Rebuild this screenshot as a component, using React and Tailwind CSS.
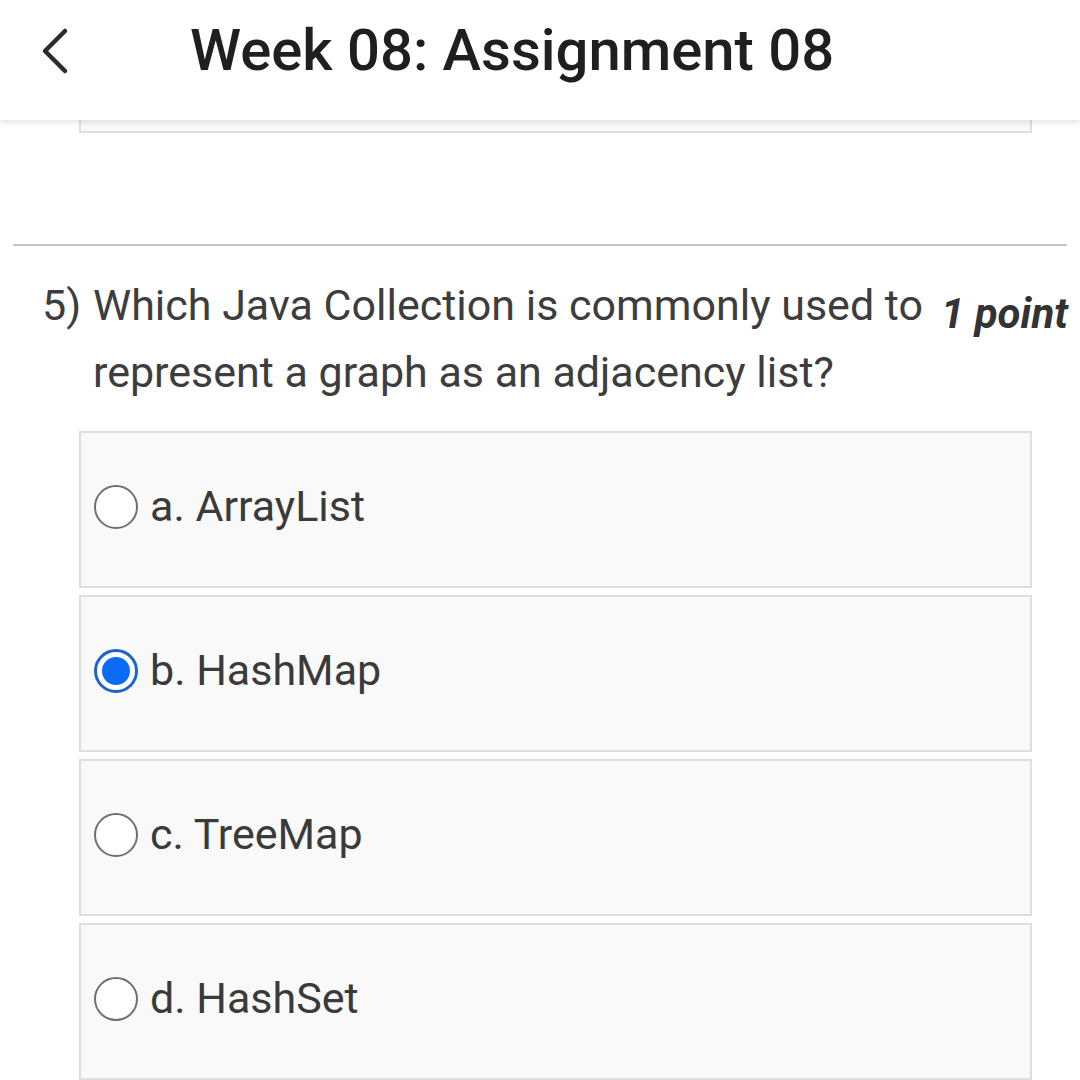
import React from 'react';

const options = [
  { key: 'a', label: 'a. ArrayList' },
  { key: 'b', label: 'b. HashMap' },
  { key: 'c', label: 'c. TreeMap' },
  { key: 'd', label: 'd. HashSet' },
];

function Radio({ checked }) {
  if (checked) {
    return (
      <span className="flex h-[44px] w-[44px] shrink-0 items-center justify-center rounded-full border-[3px] border-[#1f63c6] bg-white">
        <span className="h-[28px] w-[28px] rounded-full bg-[#0b6bf5]" />
      </span>
    );
  }
  return <span className="h-[44px] w-[44px] shrink-0 rounded-full border-[2px] border-[#707070] bg-white" />;
}

export default function App() {
  const selected = 'b';

  return (
    <div className="relative h-[1080px] w-[1080px] overflow-hidden bg-white font-['Roboto',sans-serif]">
      {/* Header */}
      <div className="relative z-10 flex h-[120px] items-center bg-white shadow-[0_2px_6px_rgba(0,0,0,0.12)]">
        <svg className="ml-[40px] mt-[-18px] h-[48px] w-[30px]" viewBox="0 0 30 48" fill="none">
          <path d="M25 4 L5 24 L25 44" stroke="#2b2b2b" strokeWidth="4.5" strokeLinecap="round" strokeLinejoin="round" />
        </svg>
        <h1 className="ml-[120px] mt-[-20px] text-[58px] font-medium leading-none text-[#1f1f1f]">
          Week 08: Assignment 08
        </h1>
      </div>

      {/* tail of previous option box */}
      <div className="ml-[79px] h-[13px] w-[953px] border-x-2 border-b-2 border-[#dedede] bg-[#f9f9f9]" />

      <div className="mx-[13px] mt-[111px] h-[2px] bg-[#c6c6c6]" />

      {/* Question */}
      <div className="mt-[26px] flex pl-[42px] pr-[12px] text-[43px] leading-[67px] text-[#3d3d3d]">
        <span className="w-[51px] shrink-0">5)</span>
        <p className="flex-1">Which Java Collection is commonly used to represent a graph as an adjacency list?</p>
        <span className="mt-[8px] whitespace-nowrap text-[42px] font-bold italic text-[#333333]">1 point</span>
      </div>

      {/* Options */}
      <div className="mt-[25px] flex flex-col gap-[7px] pl-[79px]">
        {options.map((o) => (
          <div
            key={o.key}
            className="flex h-[157px] w-[953px] items-center gap-[12px] border-2 border-[#dedede] bg-[#f9f9f9] pb-[6px] pl-[13px]"
          >
            <Radio checked={o.key === selected} />
            <span className="text-[43px] text-[#3a3a3a]">{o.label}</span>
          </div>
        ))}
      </div>
    </div>
  );
}
